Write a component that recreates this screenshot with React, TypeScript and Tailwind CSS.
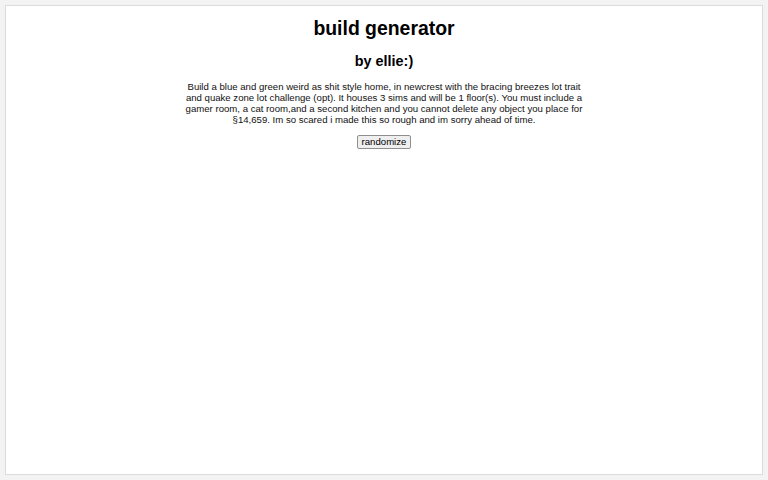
import React, { useState } from 'react'

const blurb =
  'Build a blue and green weird as shit style home, in newcrest with the bracing breezes lot trait and quake zone lot challenge (opt). It houses 3 sims and will be 1 floor(s). You must include a gamer room, a cat room,and a second kitchen and you cannot delete any object you place for §14,659. Im so scared i made this so rough and im sorry ahead of time.'

const App = () => {
  const [text] = useState(blurb)

  return (
    <div className="h-[480px] bg-[#f3f3f3] p-[5px] font-['Liberation_Sans',Arial,sans-serif] text-black">
      <div className="flex h-[470px] flex-col items-center border border-[#dcdcdc] bg-white">
        <h1 className="mt-[10px] text-[19.4px] font-bold leading-[24px]">build generator</h1>
        <h2 className="mt-[12px] text-[14.4px] font-bold leading-[18px]">by ellie:)</h2>
        <p className="mt-[11px] w-[400px] text-center text-[9.6px] leading-[11px] text-[#111]">{text}</p>
        <button className="mt-[10px] rounded-[2px] border border-[#8f8f8f] bg-[#efefef] px-[4px] text-[9.6px] leading-[12px]">
          randomize
        </button>
      </div>
    </div>
  )
}

export default App
